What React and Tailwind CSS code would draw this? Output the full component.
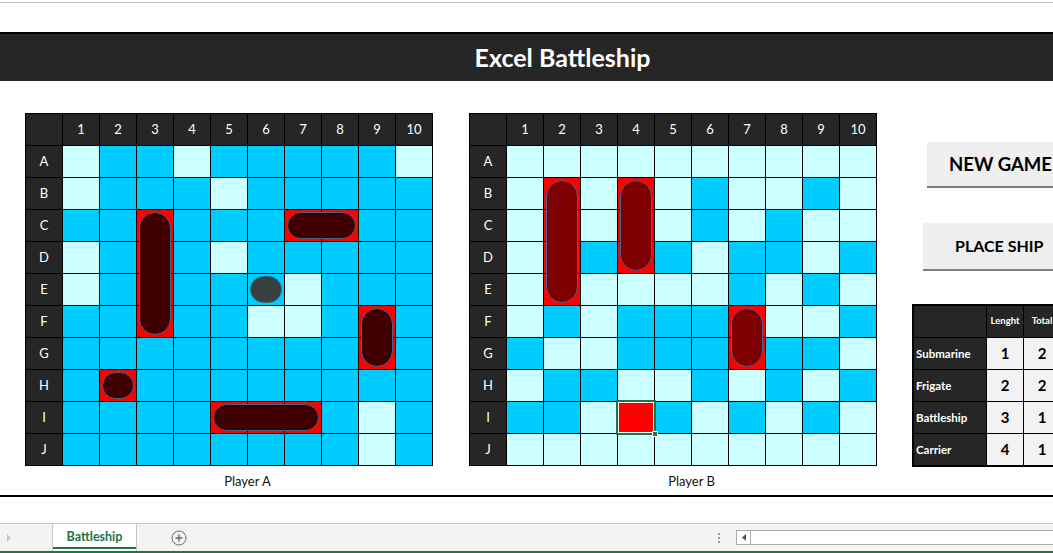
import { Fragment } from 'react'

const COLS = [1, 2, 3, 4, 5, 6, 7, 8, 9, 10]
const LETTERS = ['A', 'B', 'C', 'D', 'E', 'F', 'G', 'H', 'I', 'J']

// c = sea, l = light sea, r = hit ship cell
const FILL = {
    c: 'bg-[#00ccff]',
    l: 'bg-[#ccffff]',
    r: 'bg-[#ff0000]',
}

const boardA = [
    'lcclcccccl',
    'lccclccccc',
    'ccrcccrrcc',
    'lcrclccccc',
    'lcrccclccc',
    'ccrccllcrc',
    'ccccccccrc',
    'crcccccccc',
    'ccccrrrclc',
    'cccccccclc',
]

const boardB = [
    'llllllllll',
    'lrlrlcllcl',
    'lrlrlclcll',
    'lrcrclcclc',
    'lrllllclcl',
    'lclcccrllc',
    'cllcccrccl',
    'lccllclclc',
    'cclrclclcl',
    'llllllllll',
]

const shipsA = [
    { r: 2, c: 2, len: 4, vertical: true },
    { r: 2, c: 6, len: 2 },
    { r: 5, c: 8, len: 2, vertical: true },
    { r: 7, c: 1, len: 1 },
    { r: 8, c: 4, len: 3 },
    { r: 4, c: 5, len: 1, sunk: true },
]

const shipsB = [
    { r: 1, c: 1, len: 4, vertical: true },
    { r: 1, c: 3, len: 3, vertical: true },
    { r: 5, c: 6, len: 2, vertical: true },
]

function Board({ rows, ships, label, shipColor, selected }) {
    return (
        <div className="flex flex-col shrink-0">
            <div className="relative grid grid-cols-[repeat(11,37px)] border-l border-t border-black">
                <div className="h-8 border-r border-b border-black bg-[#262626]" />
                {COLS.map((n) => (
                    <div key={n} className="h-8 flex items-center justify-center border-r border-b border-black bg-[#262626] text-white text-[13px]">
                        {n}
                    </div>
                ))}
                {rows.map((row, r) => (
                    <Fragment key={r}>
                        <div className="h-8 flex items-center justify-center border-r border-b border-black bg-[#262626] text-white text-[13px]">
                            {LETTERS[r]}
                        </div>
                        {row.split('').map((ch, c) => (
                            <div key={c} className={`h-8 border-r border-b border-black ${FILL[ch]}`} />
                        ))}
                    </Fragment>
                ))}

                {/* ship shapes over the cells */}
                {ships.map((s, i) => (
                    <div
                        key={i}
                        className={`absolute rounded-full border border-[#4b6185] ${s.sunk ? 'bg-[#364041]' : shipColor}`}
                        style={{
                            left: (s.c + 1) * 37 + 2,
                            top: (s.r + 1) * 32 + 2,
                            width: s.vertical ? 32 : s.len * 37 - 5,
                            height: s.vertical ? s.len * 32 - 5 : 27,
                        }}
                    />
                ))}

                {selected && (
                    <div
                        className="absolute border-2 border-[#217346]"
                        style={{ left: (selected.c + 1) * 37 - 2, top: (selected.r + 1) * 32 - 2, width: 40, height: 35 }}
                    >
                        <div className="w-full h-full border border-white" />
                        <div className="absolute -right-[4px] -bottom-[4px] w-[6px] h-[6px] bg-[#217346] border border-white" />
                    </div>
                )}
            </div>
            <div className="h-[29px] flex items-center justify-center pl-[37px] pt-[2px] text-[13px] text-[#111]">{label}</div>
        </div>
    )
}

const stats = [
    ['Submarine', 1, 2],
    ['Frigate', 2, 2],
    ['Battleship', 3, 1],
    ['Carrier', 4, 1],
]

export default function App() {
    return (
        <div className="w-[1053px] h-[553px] overflow-hidden bg-white font-['Lato',sans-serif] flex flex-col">
            {/* sheet top edge */}
            <div className="h-[2px] shrink-0" />
            <div className="h-px bg-[#bdbdbd] shrink-0" />
            <div className="h-[29px] shrink-0" />

            {/* title banner */}
            <div className="h-[49px] shrink-0 border-t-2 border-black bg-[#262626] flex items-center justify-center pl-[72px]">
                <span className="text-white font-bold text-[25px]">Excel Battleship</span>
            </div>

            <div className="h-8 shrink-0" />

            {/* boards + controls */}
            <div className="flex items-start pl-[25px] border-b-2 border-black shrink-0">
                <Board rows={boardA} ships={shipsA} label="Player A" shipColor="bg-[#400000]" />
                <div className="ml-[36px] shrink-0">
                    <Board rows={boardB} ships={shipsB} label="Player B" shipColor="bg-[#7f0000]" selected={{ r: 8, c: 3 }} />
                </div>

                <div className="ml-[35px] flex flex-col items-start shrink-0">
                    <button className="mt-[29px] ml-[15px] w-[150px] h-[46px] bg-[#efefef] border-b-2 border-[#7f7f7f] text-left pl-[22px] pt-[2px] font-bold text-[18.5px] text-black">
                        NEW GAME
                    </button>
                    <button className="mt-[35px] ml-[11px] w-[150px] h-[48px] bg-[#efefef] border-b-2 border-[#7f7f7f] text-left pl-[32px] font-bold text-[16px] text-black">
                        PLACE SHIP
                    </button>

                    <div className="mt-[33px] grid grid-cols-[72px_36px_36px] gap-px bg-black border-2 border-black">
                        <div className="h-[31px] bg-[#262626]" />
                        <div className="h-[31px] bg-[#262626] flex items-center justify-center text-white font-bold text-[9.5px]">Lenght</div>
                        <div className="h-[31px] bg-[#262626] flex items-center justify-center text-white font-bold text-[9.5px]">Total</div>
                        {stats.map(([name, len, total]) => (
                            <Fragment key={name}>
                                <div className="h-[31px] bg-[#262626] flex items-center pl-[2px] text-white font-bold text-[11.5px]">{name}</div>
                                <div className="h-[31px] bg-[#f2f2f2] flex items-center justify-center font-bold text-[15px] text-black">{len}</div>
                                <div className="h-[31px] bg-[#f2f2f2] flex items-center justify-center font-bold text-[15px] text-black">{total}</div>
                            </Fragment>
                        ))}
                    </div>
                </div>
            </div>

            <div className="h-[26px] shrink-0" />

            {/* sheet tabs */}
            <div className="flex-1 flex flex-col">
                <div className="h-[28px] flex items-stretch border-t border-[#c6c6c6] bg-[#f3f3f3]">
                    <div className="w-[52px] shrink-0 flex items-center pl-[6px]">
                        <svg width="6" height="8" viewBox="0 0 6 8"><path d="M1 0 L5 4 L1 8 Z" fill="#c4c4c4" /></svg>
                    </div>
                    <div className="w-[85px] shrink-0 bg-white border-x border-[#c6c6c6] flex flex-col">
                        <div className="flex-1 flex items-center justify-center pt-[3px] text-[12.5px] font-bold text-[#217346]">Battleship</div>
                        <div className="h-[2px] bg-[#217346] mb-[2px]" />
                    </div>
                    <div className="ml-[34px] shrink-0 flex items-center">
                        <svg width="16" height="16" viewBox="0 0 16 16" fill="none" stroke="#666" strokeWidth="1">
                            <circle cx="8" cy="8" r="7" />
                            <path d="M8 4.5 V11.5 M4.5 8 H11.5" strokeWidth="1.4" />
                        </svg>
                    </div>
                    <div className="ml-[531px] shrink-0 flex flex-col justify-center gap-[2px]">
                        <div className="w-[2px] h-[2px] bg-[#999]" />
                        <div className="w-[2px] h-[2px] bg-[#999]" />
                        <div className="w-[2px] h-[2px] bg-[#999]" />
                    </div>
                    <div className="ml-[16px] shrink-0 flex items-center">
                        <div className="w-[330px] shrink-0 h-[15px] bg-white border border-[#ababab] flex">
                            <div className="w-[14px] border-r border-[#ababab] flex items-center justify-center">
                                <svg width="4" height="7" viewBox="0 0 4 7"><path d="M4 0 L0 3.5 L4 7 Z" fill="#555" /></svg>
                            </div>
                        </div>
                    </div>
                </div>
                <div className="flex-1 bg-[#217346]" />
            </div>
        </div>
    )
}
